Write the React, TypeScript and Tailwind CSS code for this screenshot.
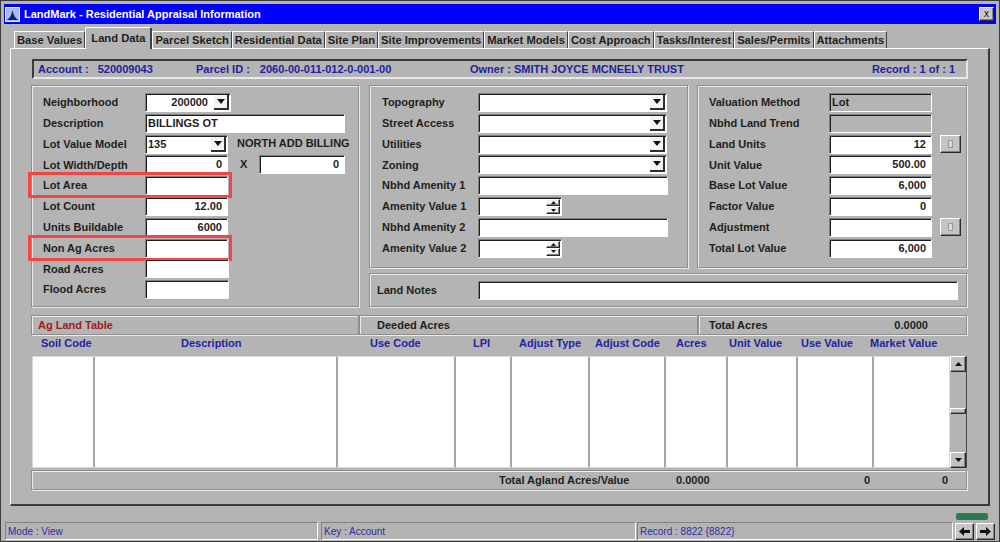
import React from 'react';

// classic win32 bevels
const sunken = 'border border-t-[#808080] border-l-[#808080] border-b-white border-r-white shadow-[inset_1px_1px_0_#1e1e1e]';
const raised = 'border border-t-white border-l-white border-b-[#2a2a2a] border-r-[#2a2a2a] shadow-[inset_-1px_-1px_0_#808080]';
const etched = 'border border-[#8e8e8e] shadow-[inset_1px_1px_0_#ececec,1px_1px_0_#ececec]';

type FieldProps = { w: string; value?: string; left?: boolean; gray?: boolean };

const Field: React.FC<FieldProps> = ({ w, value = '', left, gray }) => (
  <div
    className={`${w} h-[19px] ${gray ? 'bg-[#b4b4b4]' : 'bg-white'} ${sunken} flex items-center ${
      left ? 'justify-start pl-[2px]' : 'justify-end pr-[5px]'
    }`}
  >
    <span className="leading-none">{value}</span>
  </div>
);

const DropBtn: React.FC = () => (
  <div className="w-[15px] h-[15px] mr-[1px] bg-[#f4f4f4] border-r-2 border-b-2 border-[#2e2e2e] flex items-center justify-center">
    <svg width="8" height="5" viewBox="0 0 8 5">
      <path d="M0 0 H8 L4 5 Z" fill="#111" />
    </svg>
  </div>
);

const Select: React.FC<FieldProps> = ({ w, value = '', left }) => (
  <div className={`${w} h-[19px] bg-white ${sunken} flex items-center`}>
    <span className={`flex-1 leading-none ${left ? 'pl-[2px]' : 'text-right pr-[6px]'}`}>{value}</span>
    <DropBtn />
  </div>
);

const Spinner: React.FC<{ w: string }> = ({ w }) => (
  <div className={`${w} h-[19px] bg-white ${sunken} flex items-center justify-end pr-[1px]`}>
    <div className="w-[14px] h-[15px] flex flex-col">
      <div className={`flex-1 bg-[#f2f2f2] ${raised} flex items-center justify-center`}>
        <svg width="5" height="3" viewBox="0 0 5 3">
          <path d="M0 3 H5 L2.5 0 Z" fill="#111" />
        </svg>
      </div>
      <div className={`flex-1 bg-[#f2f2f2] ${raised} flex items-center justify-center`}>
        <svg width="5" height="3" viewBox="0 0 5 3">
          <path d="M0 0 H5 L2.5 3 Z" fill="#111" />
        </svg>
      </div>
    </div>
  </div>
);

const SmallBtn: React.FC = () => (
  <div className={`ml-[8px] w-[21px] h-[18px] bg-[#c4c4c4] ${raised} flex items-center justify-center`}>
    <div className="w-[5px] h-[8px] bg-[#dadada] border border-[#9a9a9a]" />
  </div>
);

const Row: React.FC<{ label: string; lw: string; children?: React.ReactNode; red?: boolean }> = ({
  label,
  lw,
  children,
  red,
}) => (
  <div className="relative flex items-center h-[19px]">
    <span className={`${lw} shrink-0`}>{label}</span>
    {children}
    {red && (
      <div className="absolute -left-[15px] -top-[4px] w-[204px] h-[26px] border-[3px] border-[#f04646]" />
    )}
  </div>
);

const tabs = [
  'Base Values',
  'Land Data',
  'Parcel Sketch',
  'Residential Data',
  'Site Plan',
  'Site Improvements',
  'Market Models',
  'Cost Approach',
  'Tasks/Interest',
  'Sales/Permits',
  'Attachments',
];

// header label start offsets differ from the column lines, so widths are per label
const heads: [string, string][] = [
  ['Soil Code', 'w-[140px]'],
  ['Description', 'w-[189px]'],
  ['Use Code', 'w-[103px]'],
  ['LPI', 'w-[46px]'],
  ['Adjust Type', 'w-[76px]'],
  ['Adjust Code', 'w-[81px]'],
  ['Acres', 'w-[53px]'],
  ['Unit Value', 'w-[72px]'],
  ['Use Value', 'w-[69px]'],
  ['Market Value', 'w-[80px]'],
];

const grid = 'grid grid-cols-[62px_243px_118px_56px_78px_76px_62px_70px_76px_77px]';

const App: React.FC = () => {
  return (
    <div className="w-[1000px] h-[542px] bg-[#b4b4b4] border border-[#3c3c3c] pt-[3px] px-[3px] flex flex-col font-['Liberation_Sans',Arial,sans-serif] text-[11px] font-bold text-[#1e1e1e] overflow-hidden">
      {/* title bar */}
      <div className="h-[20px] bg-[#0000fe] flex items-center px-[1px] shrink-0">
        <svg width="15" height="15" viewBox="0 0 15 15">
          <rect x="0.5" y="0.5" width="14" height="14" fill="#a8bcff" stroke="#f4f4ff" />
          <path d="M2 13 L5 10 L6.5 7 L7.5 3 L8.5 7 L10 10 L13 13 Z" fill="#101c78" />
        </svg>
        <span className="ml-[4px] text-white text-[11px]">LandMark - Residential Appraisal Information</span>
        <div className={`ml-auto mr-[1px] w-[15px] h-[14px] bg-[#c8c8c8] ${raised} flex items-center justify-center text-[10px] font-normal leading-none text-[#111]`}>
          x
        </div>
      </div>

      {/* tabs */}
      <div className="mt-[4px] h-[20px] flex items-end pl-[10px] shrink-0 text-[11.2px]">
        {tabs.map((t) =>
          t === 'Land Data' ? (
            <div
              key={t}
              className="relative z-10 -mb-px h-[22px] px-[5px] bg-[#b4b4b4] border-t border-l border-white border-r-2 border-r-[#404040] flex items-center rounded-t-[2px]"
            >
              {t}
            </div>
          ) : (
            <div
              key={t}
              className="h-[17px] px-[2px] border-t border-l border-white border-r border-r-[#404040] flex items-center"
            >
              {t}
            </div>
          )
        )}
      </div>

      {/* page */}
      <div className="ml-[6px] w-[980px] h-[458px] shrink-0 border-t border-l border-white border-r-2 border-b-2 border-r-[#3a3a3a] border-b-[#3a3a3a] flex flex-col">
        {/* header bar */}
        <div className="ml-[21px] mt-[10px] w-[936px] h-[20px] border-2 border-t-[#3a3a3a] border-l-[#3a3a3a] border-b-[#e8e8e8] border-r-[#e8e8e8] flex items-center pl-[4px] pr-[11px] text-[#1f1f9e]">
          <div className="w-[158px] flex">
            <span>Account :</span>
            <span className="ml-[9px]">520009043</span>
          </div>
          <div className="w-[274px] flex">
            <span>Parcel ID :</span>
            <span className="ml-[10px]">2060-00-011-012-0-001-00</span>
          </div>
          <span>Owner : SMITH JOYCE MCNEELY TRUST</span>
          <span className="ml-auto">Record : 1 of : 1</span>
        </div>

        {/* form panels */}
        <div className="mt-[6px] ml-[20px] flex gap-[10px]">
          <div className={`w-[328px] h-[222px] ${etched} pl-[11px] pt-[7px] flex flex-col gap-[1.8px]`}>
            <Row label="Neighborhood" lw="w-[102px]">
              <Select w="w-[86px]" value="200000" />
            </Row>
            <Row label="Description" lw="w-[102px]">
              <Field w="w-[200px]" value="BILLINGS OT" left />
            </Row>
            <Row label="Lot Value Model" lw="w-[102px]">
              <Select w="w-[83px]" value="135" left />
              <span className="ml-[9px] -mt-[2px]">NORTH ADD BILLING</span>
            </Row>
            <Row label="Lot Width/Depth" lw="w-[102px]">
              <Field w="w-[83px]" value="0" />
              <span className="ml-[12px] w-[19px] -mt-[2px]">X</span>
              <Field w="w-[86px]" value="0" />
            </Row>
            <Row label="Lot Area" lw="w-[102px]" red>
              <Field w="w-[83px]" />
            </Row>
            <Row label="Lot Count" lw="w-[102px]">
              <Field w="w-[83px]" value="12.00" />
            </Row>
            <Row label="Units Buildable" lw="w-[102px]">
              <Field w="w-[83px]" value="6000" />
            </Row>
            <Row label="Non Ag Acres" lw="w-[102px]" red>
              <Field w="w-[83px]" />
            </Row>
            <Row label="Road Acres" lw="w-[102px]">
              <Field w="w-[84px]" />
            </Row>
            <Row label="Flood Acres" lw="w-[102px]">
              <Field w="w-[84px]" />
            </Row>
          </div>

          <div className="w-[598px] flex flex-col">
            <div className="flex gap-[9px]">
              <div className={`w-[319px] h-[183px] ${etched} pl-[12px] pt-[7px] flex flex-col gap-[1.8px]`}>
                <Row label="Topography" lw="w-[96px]">
                  <Select w="w-[189px]" />
                </Row>
                <Row label="Street Access" lw="w-[96px]">
                  <Select w="w-[189px]" />
                </Row>
                <Row label="Utilities" lw="w-[96px]">
                  <Select w="w-[189px]" />
                </Row>
                <Row label="Zoning" lw="w-[96px]">
                  <Select w="w-[189px]" />
                </Row>
                <Row label="Nbhd Amenity 1" lw="w-[96px]">
                  <Field w="w-[190px]" left />
                </Row>
                <Row label="Amenity Value 1" lw="w-[96px]">
                  <Spinner w="w-[84px]" />
                </Row>
                <Row label="Nbhd Amenity 2" lw="w-[96px]">
                  <Field w="w-[190px]" left />
                </Row>
                <Row label="Amenity Value 2" lw="w-[96px]">
                  <Spinner w="w-[84px]" />
                </Row>
              </div>
              <div className={`w-[270px] h-[183px] ${etched} pl-[11px] pt-[7px] flex flex-col gap-[1.8px]`}>
                <Row label="Valuation Method" lw="w-[120px]">
                  <Field w="w-[103px]" value="Lot" left gray />
                </Row>
                <Row label="Nbhd Land Trend" lw="w-[120px]">
                  <Field w="w-[103px]" gray />
                </Row>
                <Row label="Land Units" lw="w-[120px]">
                  <Field w="w-[103px]" value="12" />
                  <SmallBtn />
                </Row>
                <Row label="Unit Value" lw="w-[120px]">
                  <Field w="w-[103px]" value="500.00" />
                </Row>
                <Row label="Base Lot Value" lw="w-[120px]">
                  <Field w="w-[103px]" value="6,000" />
                </Row>
                <Row label="Factor Value" lw="w-[120px]">
                  <Field w="w-[103px]" value="0" />
                </Row>
                <Row label="Adjustment" lw="w-[120px]">
                  <Field w="w-[103px]" />
                  <SmallBtn />
                </Row>
                <Row label="Total Lot Value" lw="w-[120px]">
                  <Field w="w-[103px]" value="6,000" />
                </Row>
              </div>
            </div>
            <div className={`mt-[5px] h-[34px] ${etched} flex items-center pl-[7px]`}>
              <span className="w-[101px]">Land Notes</span>
              <Field w="w-[480px]" left />
            </div>
          </div>
        </div>

        {/* ag land table */}
        <div className="mt-[8px] ml-[20px] w-[936px] flex flex-col">
          <div className="h-[20px] flex">
            <div className={`w-[328px] ${etched} flex items-center pl-[6px] text-[#a01c1c]`}>Ag Land Table</div>
            <div className={`w-[339px] ${etched} flex items-center pl-[17px]`}>Deeded Acres</div>
            <div className={`flex-1 ${etched} flex items-center pl-[10px] pr-[38px]`}>
              <span>Total Acres</span>
              <span className="ml-auto">0.0000</span>
            </div>
          </div>
          <div className="h-[20px] pl-[10px] pt-[2px] flex items-start leading-[13px] text-[#2323a6]">
            {heads.map(([c, w]) => (
              <span key={c} className={`${w} shrink-0`}>
                {c}
              </span>
            ))}
          </div>
          <div className="mt-[1px] h-[112px] flex">
            <div className={`ml-[1px] w-[918px] bg-white border border-[#d6d6d6] ${grid}`}>
              {heads.map(([c], i) => (
                <div key={c} className={i < heads.length - 1 ? 'border-r-2 border-r-[#a6a6a6]' : ''} />
              ))}
            </div>
            <div className="w-[17px] bg-[#b4b4b4] border-r border-[#4a4a4a] flex flex-col">
              <div className={`h-[16px] bg-[#c2c2c2] ${raised} flex items-center justify-center`}>
                <svg width="7" height="4" viewBox="0 0 7 4">
                  <path d="M0 4 H7 L3.5 0 Z" fill="#111" />
                </svg>
              </div>
              <div className="flex-1 flex flex-col">
                <div className="h-[36px]" />
                <div className={`h-[6px] bg-[#c2c2c2] ${raised}`} />
              </div>
              <div className={`h-[16px] bg-[#c2c2c2] ${raised} flex items-center justify-center`}>
                <svg width="7" height="4" viewBox="0 0 7 4">
                  <path d="M0 0 H7 L3.5 4 Z" fill="#111" />
                </svg>
              </div>
            </div>
          </div>
          <div className={`mt-[2px] h-[20px] ${etched} flex items-center`}>
            <span className="w-[644px] pl-[467px]">Total Agland Acres/Value</span>
            <span className="w-[142px]">0.0000</span>
            <span className="w-[52px] text-right">0</span>
            <span className="w-[78px] text-right">0</span>
          </div>
        </div>
      </div>

      {/* status area */}
      <div className="flex-1 flex flex-col font-normal text-[10px] text-[#2e2ea0]">
        <div className="mt-[7px] h-[7px] w-[32px] ml-auto mr-[8px] rounded-[2px] bg-[#2d7a50]" />
        <div className="mt-[2px] h-[18px] ml-[1px] flex items-center">
          <div className={`w-[313px] h-full ${sunken} shadow-none flex items-center pl-[2px]`}>Mode : View</div>
          <div className={`ml-[3px] w-[315px] h-full ${sunken} shadow-none flex items-center pl-[2px]`}>Key : Account</div>
          <div className={`ml-[1px] w-[316px] h-full ${sunken} shadow-none flex items-center pl-[2px]`}>Record : 8822 {'{8822}'}</div>
          <div className={`ml-[2px] w-[19px] h-[17px] bg-[#c6c6c6] ${raised} flex items-center justify-center`}>
            <svg width="11" height="9" viewBox="0 0 11 9">
              <path d="M0 4.5 L5 0 V3 H11 V6 H5 V9 Z" fill="#111" />
            </svg>
          </div>
          <div className={`ml-[2px] w-[19px] h-[17px] bg-[#c6c6c6] ${raised} flex items-center justify-center`}>
            <svg width="11" height="9" viewBox="0 0 11 9">
              <path d="M11 4.5 L6 0 V3 H0 V6 H6 V9 Z" fill="#111" />
            </svg>
          </div>
        </div>
      </div>
    </div>
  );
};

export default App;
